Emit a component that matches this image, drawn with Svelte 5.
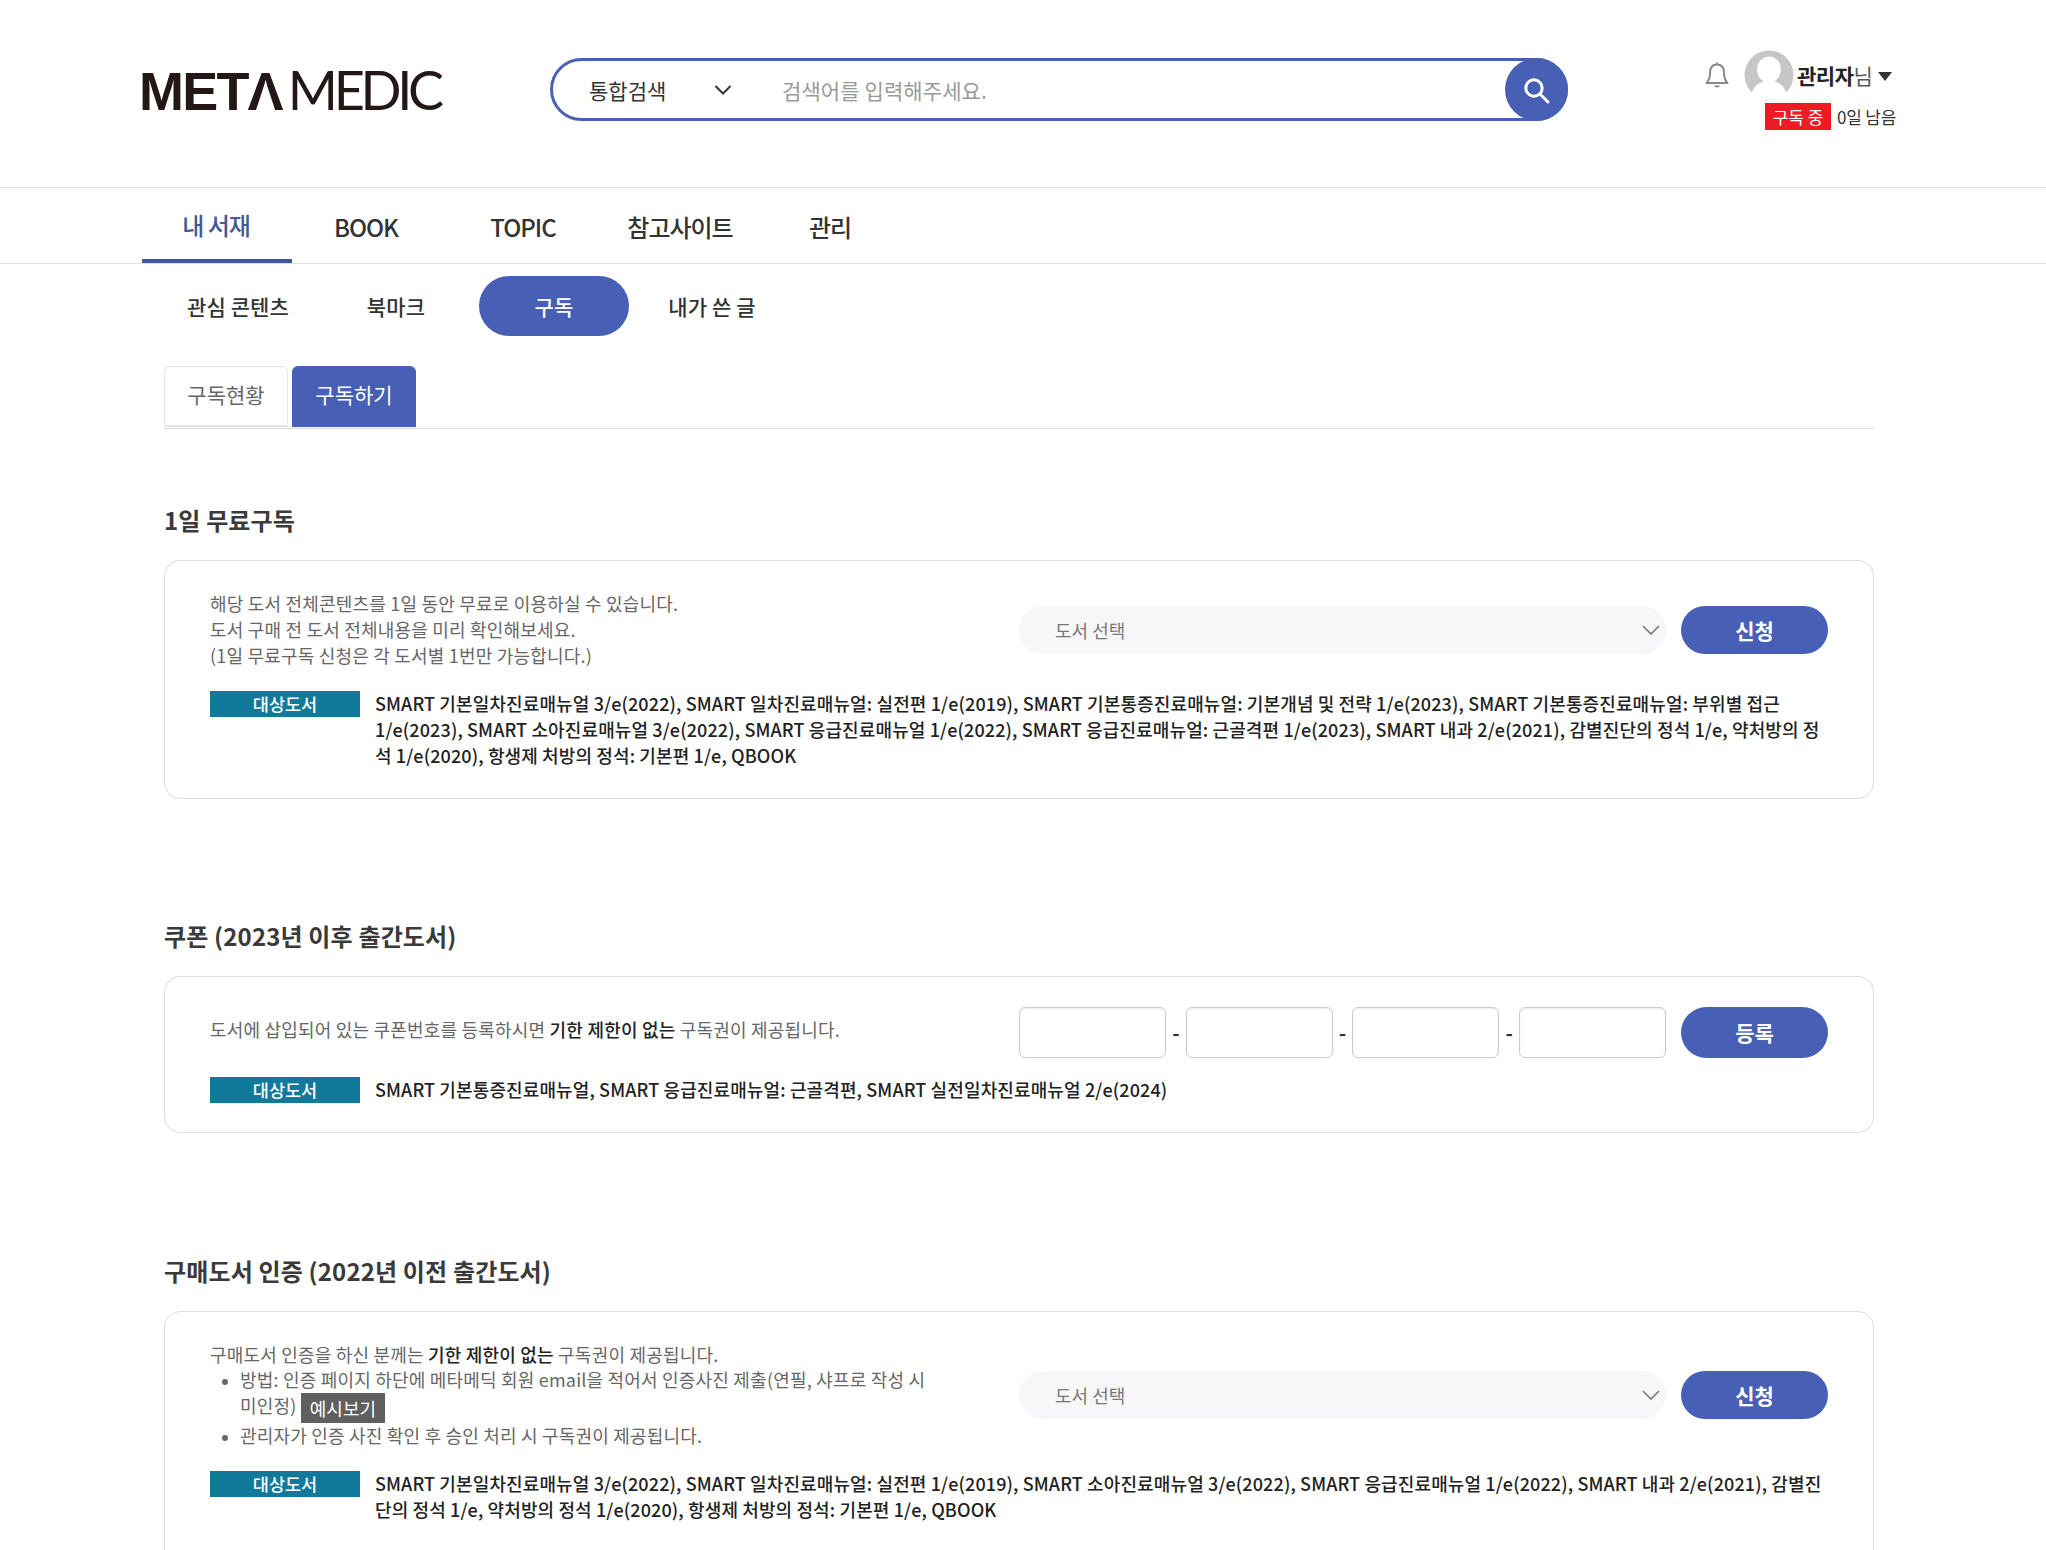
<script>
  const navItems = ['내 서재', 'BOOK', 'TOPIC', '참고사이트', '관리'];
  const subItems = ['관심 콘텐츠', '북마크', '구독', '내가 쓴 글'];
</script>

<div class="page">
  <header class="header">
    <div class="logo"><span class="logo-a">METΛ</span><span class="logo-b">MEDIC</span></div>
    <div class="search">
      <div class="search-kind">
        <span>통합검색</span>
        <svg width="18" height="10" viewBox="0 0 18 10"><path d="M1.5 1 L9 8.5 L16.5 1" fill="none" stroke="#333" stroke-width="2"/></svg>
      </div>
      <span class="placeholder">검색어를 입력해주세요.</span>
      <div class="search-btn">
        <svg width="30" height="30" viewBox="0 0 30 30"><circle cx="13" cy="13" r="8.2" fill="none" stroke="#fff" stroke-width="3"/><path d="M19 19 L27 27" stroke="#fff" stroke-width="3" stroke-linecap="round"/></svg>
      </div>
    </div>
    <div class="user">
      <div class="user-top">
        <svg class="bell" width="24" height="28" viewBox="0 0 24 28"><path d="M12 1.5 V3.5 M12 3.5 C7 3.5 5 7.5 5 12 C5 17 4 19.5 1.5 22 H22.5 C20 19.5 19 17 19 12 C19 7.5 17 3.5 12 3.5 Z" fill="none" stroke="#888" stroke-width="2" stroke-linejoin="round"/><path d="M9 24.5 H15 C14.5 27 9.5 27 9 24.5 Z" fill="#888"/></svg>
        <svg class="avatar" width="50" height="50" viewBox="0 0 50 50"><defs><clipPath id="av"><circle cx="25" cy="25" r="24.5"/></clipPath></defs><circle cx="25" cy="25" r="24.5" fill="#c6c6c6"/><g clip-path="url(#av)"><ellipse cx="25" cy="19.5" rx="12" ry="13" fill="#fff"/><ellipse cx="25" cy="46" rx="17.5" ry="15.5" fill="#fff"/><rect x="0" y="43" width="50" height="8" fill="#fff"/></g></svg>
        <span class="name"><b>관리자</b>님</span>
        <span class="caret"></span>
      </div>
      <div class="user-bottom">
        <span class="badge">구독 중</span>
        <span class="left">0일 남음</span>
      </div>
    </div>
  </header>

  <nav class="nav">
    {#each navItems as item, i}
      <a class="nav-item" class:active={i === 0}>{item}</a>
    {/each}
  </nav>

  <div class="subnav">
    {#each subItems as item, i}
      <a class="sub-item" class:on={i === 2}>{item}</a>
    {/each}
  </div>

  <main class="main">
    <div class="tabs">
      <a class="tab">구독현황</a>
      <a class="tab on">구독하기</a>
    </div>

    <section class="section first">
      <h2>1일 무료구독</h2>
      <div class="card one">
        <div class="row">
          <div class="desc">
            해당 도서 전체콘텐츠를 1일 동안 무료로 이용하실 수 있습니다.<br />
            도서 구매 전 도서 전체내용을 미리 확인해보세요.<br />
            (1일 무료구독 신청은 각 도서별 1번만 가능합니다.)
          </div>
          <div class="ctrl">
            <div class="select">
              <span>도서 선택</span>
              <svg width="18" height="10" viewBox="0 0 18 10"><path d="M1 1 L9 9 L17 1" fill="none" stroke="#777" stroke-width="1.6"/></svg>
            </div>
            <button class="btn">신청</button>
          </div>
        </div>
        <div class="target">
          <span class="label">대상도서</span>
          <p>SMART 기본일차진료매뉴얼 3/e(2022), SMART 일차진료매뉴얼: 실전편 1/e(2019), SMART 기본통증진료매뉴얼: 기본개념 및 전략 1/e(2023), SMART 기본통증진료매뉴얼: 부위별 접근 1/e(2023), SMART 소아진료매뉴얼 3/e(2022), SMART 응급진료매뉴얼 1/e(2022), SMART 응급진료매뉴얼: 근골격편 1/e(2023), SMART 내과 2/e(2021), 감별진단의 정석 1/e, 약처방의 정석 1/e(2020), 항생제 처방의 정석: 기본편 1/e, QBOOK</p>
        </div>
      </div>
    </section>

    <section class="section">
      <h2>쿠폰 (2023년 이후 출간도서)</h2>
      <div class="card two">
        <div class="row">
          <div class="desc">도서에 삽입되어 있는 쿠폰번호를 등록하시면 <b>기한 제한이 없는</b> 구독권이 제공됩니다.</div>
          <div class="ctrl tall">
            <div class="coupon">
              <span class="code"></span><i>-</i><span class="code"></span><i>-</i><span class="code"></span><i>-</i><span class="code"></span>
            </div>
            <button class="btn">등록</button>
          </div>
        </div>
        <div class="target tight">
          <span class="label">대상도서</span>
          <p>SMART 기본통증진료매뉴얼, SMART 응급진료매뉴얼: 근골격편, SMART 실전일차진료매뉴얼 2/e(2024)</p>
        </div>
      </div>
    </section>

    <section class="section third">
      <h2>구매도서 인증 (2022년 이전 출간도서)</h2>
      <div class="card three">
        <div class="row">
          <div class="desc">
            구매도서 인증을 하신 분께는 <b>기한 제한이 없는</b> 구독권이 제공됩니다.
            <ul>
              <li>방법: 인증 페이지 하단에 메타메딕 회원 email을 적어서 인증사진 제출(연필, 샤프로 작성 시 미인정) <span class="chip">예시보기</span></li>
              <li>관리자가 인증 사진 확인 후 승인 처리 시 구독권이 제공됩니다.</li>
            </ul>
          </div>
          <div class="ctrl">
            <div class="select">
              <span>도서 선택</span>
              <svg width="18" height="10" viewBox="0 0 18 10"><path d="M1 1 L9 9 L17 1" fill="none" stroke="#777" stroke-width="1.6"/></svg>
            </div>
            <button class="btn">신청</button>
          </div>
        </div>
        <div class="target">
          <span class="label">대상도서</span>
          <p>SMART 기본일차진료매뉴얼 3/e(2022), SMART 일차진료매뉴얼: 실전편 1/e(2019), SMART 소아진료매뉴얼 3/e(2022), SMART 응급진료매뉴얼 1/e(2022), SMART 내과 2/e(2021), 감별진단의 정석 1/e, 약처방의 정석 1/e(2020), 항생제 처방의 정석: 기본편 1/e, QBOOK</p>
        </div>
      </div>
    </section>
  </main>
</div>

<style>
  :global(body) { margin: 0; background: #fff; }
  .page {
    width: 2046px; height: 1550px; overflow: hidden; color: #222;
    font-family: "Noto Sans CJK KR", "Noto Sans", sans-serif;
  }
  a { display: block; }

  .header {
    height: 187px; border-bottom: 1px solid #ddd; box-sizing: content-box;
    display: flex; align-items: flex-start; padding-left: 142px; position: relative;
  }
  .logo { width: 408px; margin-top: 70px; height: 39px; line-height: 39px; color: #231815; font-size: 54px; white-space: nowrap; font-family: "Liberation Sans", sans-serif; }
  .logo-a { font-weight: 700; letter-spacing: -1.8px; margin-left: -3px; }
  .logo-b { letter-spacing: -4.3px; margin-left: 6px; font-family: "Lato", sans-serif; font-weight: 400; }

  .search {
    margin-top: 58px; width: 1018px; height: 63px; box-sizing: border-box;
    border: 3px solid #4760b5; border-radius: 32px; display: flex; align-items: center;
    position: relative; padding-left: 36px; font-size: 21px;
  }
  .search-kind { width: 193px; display: flex; align-items: center; gap: 48px; color: #333; flex: none; }
  .placeholder { color: #999; letter-spacing: 0.1px; }
  .search-btn {
    position: absolute; right: -3px; top: -3px; width: 63px; height: 63px; border-radius: 50%;
    background: #4760b5; display: flex; align-items: center; justify-content: center;
  }
  .search-btn svg { margin: 1px 1px 0 0; }

  .user { margin-left: 137px; margin-top: 50px; width: 200px; }
  .user-top { display: flex; align-items: center; height: 50px; }
  .bell { flex: none; margin-right: 15px; }
  .avatar { flex: none; margin-right: 3px; }
  .name { font-size: 21px; color: #555; letter-spacing: -0.5px; font-weight: 400; white-space: nowrap; }
  .name b { color: #222; font-weight: 700; }
  .caret { width: 0; height: 0; border-left: 7px solid transparent; border-right: 7px solid transparent; border-top: 9px solid #333; margin-left: 6px; margin-top: 3px; }
  .user-bottom { display: flex; align-items: center; margin-left: 60px; margin-top: 3px; gap: 6px; white-space: nowrap; }
  .badge { width: 66px; height: 27px; background: #ed1c24; color: #fff; font-size: 17px; display: flex; align-items: center; justify-content: center; }
  .left { font-size: 17px; color: #333; letter-spacing: -0.2px; }

  .nav {
    height: 75px; border-bottom: 1px solid #ddd; padding-left: 142px;
    display: grid; grid-template-columns: 150px 150px 164px 150px 150px;
  }
  .nav-item { font-size: 24px; font-weight: 500; letter-spacing: -1px; text-align: center; line-height: 78px; color: #333; height: 75px; padding-right: 2px; box-sizing: border-box; }
  .nav-item.active { color: #3f5a96; line-height: 73px; box-shadow: inset 0 -4px 0 #3f5a96; }

  .subnav { padding-left: 163px; margin-top: 12px; display: flex; gap: 8px; }
  .sub-item { width: 150px; height: 60px; line-height: 60px; text-align: center; font-size: 21px; font-weight: 500; border-radius: 30px; color: #333; letter-spacing: 0.1px; }
  .sub-item.on { background: #4760b5; color: #fff; }

  .main { margin-left: 164px; width: 1710px; }
  .tabs { margin-top: 30px; height: 62px; border-bottom: 1px solid #ddd; display: flex; gap: 4px; }
  .tab {
    width: 124px; box-sizing: border-box; height: 61px; text-align: center; line-height: 54px;
    font-size: 21px; color: #666; border: 1.5px solid #e4e4e4; border-bottom-width: 2px; border-radius: 6px 6px 0 0;
  }
  .tab.on { background: #4760b5; border-color: #4760b5; color: #fff; }

  .section { margin-top: 119px; }
  .section.first { margin-top: 73px; }
  .section.third { margin-top: 120px; }
  h2 { margin: 0 0 22px; font-size: 24px; line-height: 36px; font-weight: 700; color: #3a3a3a; letter-spacing: 0.15px; }

  .card { border: 1px solid #ddd; border-radius: 16px; padding: 29px 45px; }
  .card.one { padding-bottom: 30px; }
  .card.two { padding-top: 30px; }
  .card.three { padding-bottom: 80px; }
  .row { display: flex; align-items: center; justify-content: space-between; }
  .desc { width: 740px; font-size: 18px; line-height: 26px; color: #666; letter-spacing: 0.2px; }
  .two .desc { margin-bottom: 8px; }
  .one .ctrl { margin-top: 2px; }
  .desc b { color: #222; font-weight: 500; }
  ul { margin: -1px 0 0; padding: 0 0 0 30px; }
  li { word-break: keep-all; }
  li::marker { color: #666; font-size: 15px; }
  .chip { display: inline-block; background: #5f5f5f; color: #fff; padding: 0 9px; height: 30px; line-height: 30px; letter-spacing: 0; vertical-align: middle; margin: -1px 0; }

  .ctrl { display: flex; align-items: center; gap: 15px; }
  .select {
    width: 647px; height: 48px; box-sizing: border-box; background: #f7f7f9; border-radius: 24px;
    display: flex; align-items: center; justify-content: space-between; padding: 0 6px 0 36px;
    font-size: 18px; color: #777;
  }
  .btn {
    width: 147px; height: 48px; border: 0; border-radius: 24px; background: #4760b5; color: #fff;
    font: 700 21px "Noto Sans CJK KR", sans-serif; padding: 0;
  }
  .tall .btn { height: 51px; border-radius: 26px; padding-bottom: 2px; }
  .coupon { width: 647px; display: flex; align-items: center; justify-content: space-between; }
  .code { width: 147px; height: 51px; box-sizing: border-box; border: 1px solid #ccc; border-radius: 6px; box-shadow: inset 0 1px 2px rgba(0,0,0,.08); }
  .coupon i { font-style: normal; font-weight: 700; font-size: 20px; color: #333; }

  .target { display: flex; margin-top: 22px; align-items: flex-start; }
  .target.tight { margin-top: 18px; }
  .label { flex: none; width: 150px; height: 26px; background: #117a9b; color: #fff; font-size: 17.5px; font-weight: 500; text-align: center; line-height: 26px; margin-right: 16px; margin-top: 1px; }
  .target p { margin: 0 0 0 -1px; font-size: 18px; line-height: 26px; color: #222; letter-spacing: 0.12px; font-weight: 500; }
</style>
